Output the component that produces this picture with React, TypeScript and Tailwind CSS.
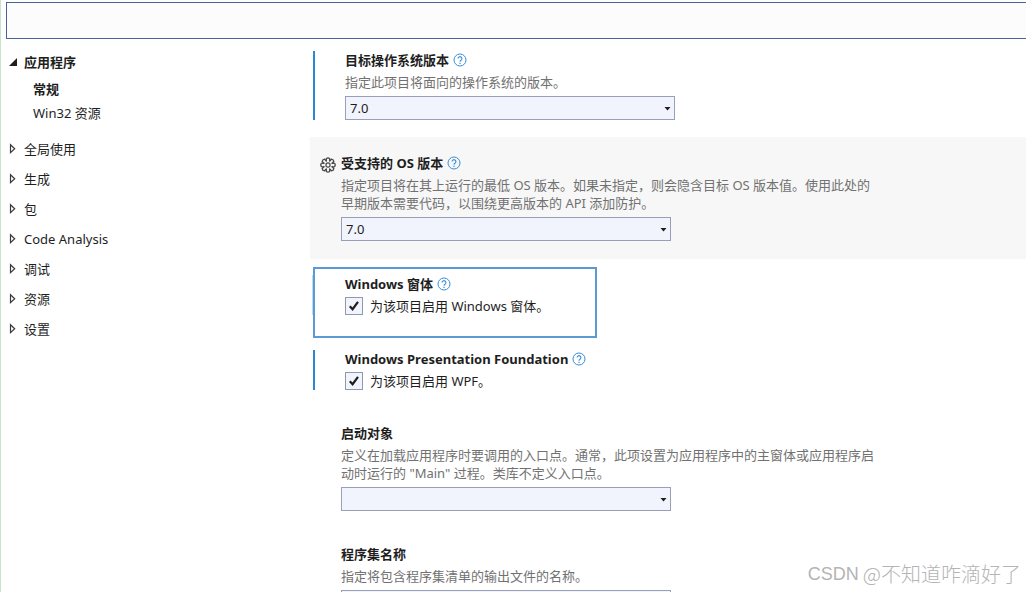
import { useState } from "react"
import type { ReactNode } from "react"

const others = ["全局使用", "生成", "包", "Code Analysis", "调试", "资源", "设置"]

function HelpLink({ topic }: { topic: string }) {
  return (
    <a href="#help" aria-label={topic} className="ml-1 block">
      <svg width="14" height="14" viewBox="0 0 14 14" fill="none" stroke="#3a8fd6">
        <circle cx="7" cy="7" r="6" />
        <path d="M5.1 5.6a1.9 1.9 0 1 1 2.9 1.6C7.3 7.6 7 7.9 7 8.7" strokeWidth="1.1" />
        <path d="M7 9.8v1.2" strokeWidth="1.2" />
      </svg>
    </a>
  )
}

function GearIcon() {
  const teeth = [0, 45, 90, 135, 180, 225, 270, 315]
  return (
    <svg width="16" height="16" viewBox="0 0 16 16" fill="none" stroke="#484848">
      {teeth.map((angle) => (
        <path
          key={angle}
          d="M6.2 4.4 6.4 1.4Q8 .2 9.6 1.4L9.8 4.4"
          strokeWidth="1.3"
          transform={`rotate(${angle} 8 8)`}
        />
      ))}
      <circle cx="8" cy="8" r="2.1" strokeWidth="1.2" />
    </svg>
  )
}

function Title({ children, help, htmlFor }: { children: string; help?: boolean; htmlFor?: string }) {
  return (
    <div className="flex h-[18px] items-center font-bold text-[#1e1e1e]">
      {htmlFor ? <label htmlFor={htmlFor}>{children}</label> : <h3>{children}</h3>}
      {help && <HelpLink topic={children} />}
    </div>
  )
}

function Description({ children }: { children: ReactNode }) {
  return <p className="mt-1 whitespace-pre-line text-[#717171]">{children}</p>
}

function Dropdown({ id, options }: { id: string; options: string[] }) {
  return (
    <div className="relative mt-[5px] w-[330px] max-w-full">
      <select
        id={id}
        className="block h-6 w-full appearance-none border border-[#97a0b8] bg-[#f1f4fd] px-1 text-[#1e1e1e]"
      >
        {options.map((o) => (
          <option key={o}>{o}</option>
        ))}
      </select>
      <svg className="pointer-events-none absolute top-[11px] right-1" width="7" height="4" viewBox="0 0 7 4">
        <path d="M.5 0h6L3.5 3.5z" fill="#1e1e1e" />
      </svg>
    </div>
  )
}

function Check({ children }: { children: string }) {
  const [on, setOn] = useState(true)
  return (
    <label className="mt-1 flex items-center gap-[7px] text-[#1e1e1e]">
      <span className="grid">
        <input
          type="checkbox"
          checked={on}
          onChange={() => setOn(!on)}
          className="col-start-1 row-start-1 size-[18px] appearance-none border border-[#8e98b0] bg-[#f1f4fd]"
        />
        {on && (
          <svg
            className="pointer-events-none col-start-1 row-start-1"
            width="18"
            height="18"
            viewBox="0 0 18 18"
            fill="none"
            stroke="#1e1e1e"
            strokeWidth="2.2"
          >
            <path d="M4.8 9.2 7.6 12.2 13 4.8" />
          </svg>
        )}
      </span>
      {children}
    </label>
  )
}

function Sidebar() {
  return (
    <nav className="w-[303px] shrink-0 pt-[14px] text-[#1e1e1e]">
      <a href="#app" className="flex h-[18px] items-center font-bold">
        <svg width="17" height="10" viewBox="0 0 17 10">
          <path d="M10 1v8H2z" fill="#1e1e1e" />
        </svg>
        应用程序
      </a>
      <div className="mt-[6px] mb-[9px] pl-[26px]">
        <a href="#general" className="block h-6 leading-6 font-bold">常规</a>
        <a href="#win32" className="block h-6 leading-6">Win32 资源</a>
      </div>
      {others.map((name) => (
        <a href="#section" key={name} className="flex h-[30px] items-center">
          <svg width="17" height="12" viewBox="0 0 17 12" fill="none" stroke="#3a3a3a">
            <path d="M3.5 1.7v8L7.7 5.7z" strokeWidth="1.2" />
          </svg>
          {name}
        </a>
      ))}
    </nav>
  )
}

export default function App() {
  return (
    <div
      lang="zh-CN"
      className="relative h-screen overflow-hidden border-l border-[#c5e6cb] bg-white font-['Noto_Sans','Noto_Sans_CJK_SC',sans-serif] text-[13px] leading-[18px]"
    >
      <div className="pt-[2px] pl-[5px]">
        <input
          type="search"
          aria-label="搜索"
          className="block h-[37px] w-full appearance-none border border-r-0 border-[#4a619c] bg-[#fcfcfc] px-2"
        />
      </div>
      <div className="flex pl-[6px]">
        <Sidebar />
        <main className="min-w-0 grow pt-3">
          <section className="ml-[3px] border-l-2 border-[#2a88da] pl-[30px]">
            <Title help htmlFor="target">目标操作系统版本</Title>
            <Description>指定此项目将面向的操作系统的版本。</Description>
            <Dropdown id="target" options={["7.0"]} />
          </section>

          <section className="mt-[17px] flex bg-[#f7f7f7] pt-[17px] pb-[18px] pl-[10px]">
            <div className="w-[21px] shrink-0 pt-[3px]">
              <GearIcon />
            </div>
            <div>
              <Title help htmlFor="supported">受支持的 OS 版本</Title>
              <Description>
                {"指定项目将在其上运行的最低 OS 版本。如果未指定，则会隐含目标 OS 版本值。使用此处的\n早期版本需要代码，以围绕更高版本的 API 添加防护。"}
              </Description>
              <Dropdown id="supported" options={["7.0"]} />
            </div>
          </section>

          <section className="mt-2 ml-[2px] flex">
            <div className="mt-2 mb-[23px] w-px bg-[#b9dcf5]" />
            <div className="w-[284px] border-2 border-[#5b9bd5] pt-[6px] pb-[21px] pl-[30px]">
              <Title help>Windows 窗体</Title>
              <Check>为该项目启用 Windows 窗体。</Check>
            </div>
          </section>

          <section className="mt-3 ml-[3px] border-l-2 border-[#2a88da] pl-[30px]">
            <Title help>Windows Presentation Foundation</Title>
            <Check>为该项目启用 WPF。</Check>
          </section>

          <section className="mt-[34px] pl-[31px]">
            <Title htmlFor="startup">启动对象</Title>
            <Description>
              {"定义在加载应用程序时要调用的入口点。通常，此项设置为应用程序中的主窗体或应用程序启\n动时运行的 \"Main\" 过程。类库不定义入口点。"}
            </Description>
            <Dropdown id="startup" options={[""]} />
          </section>

          <section className="mt-[34px] pl-[31px]">
            <Title htmlFor="assembly">程序集名称</Title>
            <Description>指定将包含程序集清单的输出文件的名称。</Description>
            <input
              id="assembly"
              className="mt-[5px] block h-6 w-[330px] max-w-full border border-[#97a0b8] bg-[#f1f4fd] px-1"
            />
          </section>
        </main>
      </div>
      <div className="absolute right-[5px] bottom-1 flex gap-1 leading-7 text-[#b4b4b4]">
        <span className="font-['Liberation_Sans',sans-serif] text-[18px]">CSDN</span>
        <span className="font-['Noto_Sans_CJK_SC',sans-serif] text-[20px] font-light">@不知道咋滴好了</span>
      </div>
    </div>
  )
}
